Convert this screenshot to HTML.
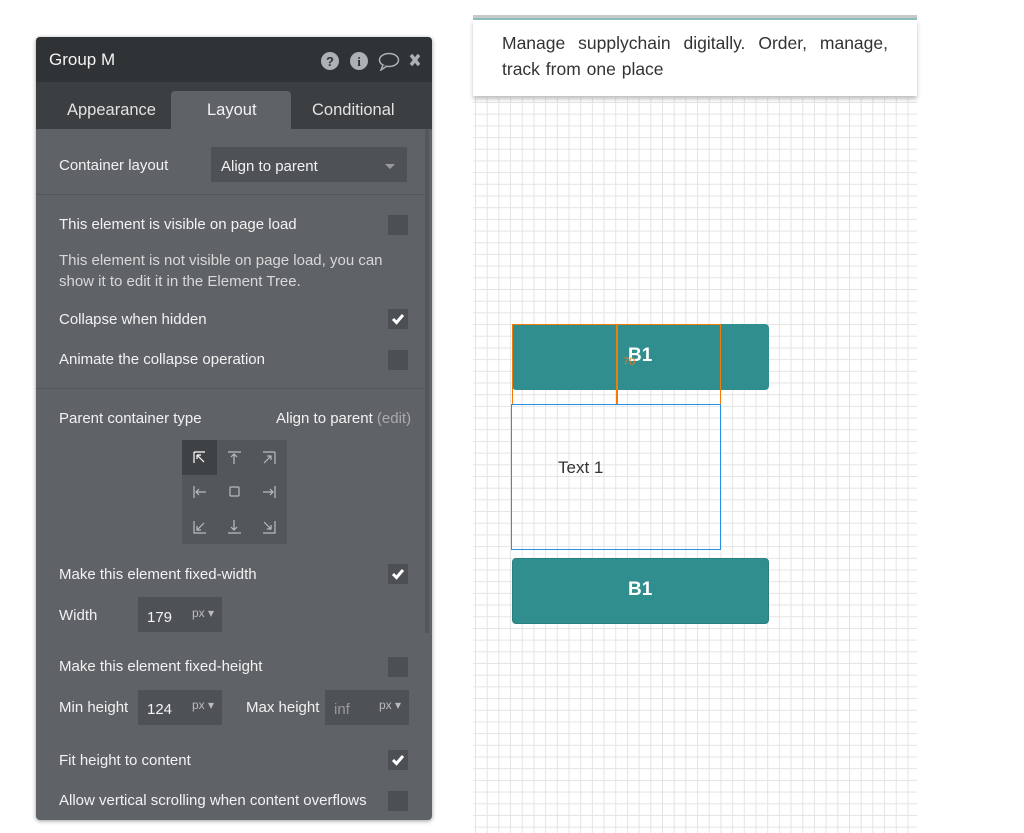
<!DOCTYPE html>
<html><head><meta charset="utf-8"><style>
*{margin:0;padding:0;box-sizing:border-box}
body{width:1024px;height:833px;background:#fff;position:relative;overflow:hidden;font-family:"Liberation Sans","DejaVu Sans",sans-serif}
.a{position:absolute}
.grid{left:473px;top:98px;width:444px;height:735px;background-color:#fff;
background-image:linear-gradient(to right,#e4e4e4 1px,transparent 1px),linear-gradient(to bottom,#e4e4e4 1px,transparent 1px);
background-size:11.7px 11.7px;background-position:2px 4px}
.panel{left:36px;top:37px;width:396px;height:783px;background:#5f6367;border-radius:4px;overflow:hidden;box-shadow:0 1px 4px rgba(0,0,0,.4)}
.t{color:#f2f2f2;font-size:15px;position:absolute;white-space:nowrap}
.cb{position:absolute;left:352px;width:20px;height:20px;background:#4c5053}
.cb svg{position:absolute;left:3px;top:4px}
.inp{position:absolute;background:#4e5256;height:35px}
.sep{position:absolute;left:0;width:388px;height:1px;background:#53575a}
</style></head><body>
<div class="a grid"></div>
<div class="a" style="left:473px;top:15px;width:444px;height:3px;background:#c9c9c9"></div>
<div class="a" style="left:473px;top:18px;width:444px;height:2px;background:#8dbfbd"></div>
<div class="a" style="left:473px;top:20px;width:444px;height:76px;background:#fff;box-shadow:0 3px 4px rgba(0,0,0,.25)"></div>
<div class="a" style="left:502px;top:30px;width:386px;font-size:17.5px;line-height:26px;color:#333;text-align:justify;text-align-last:justify;white-space:nowrap">Manage supplychain digitally. Order, manage,</div>
<div class="a" style="left:502px;top:56px;width:386px;font-size:17.5px;line-height:26px;color:#333;word-spacing:1px">track from one place</div>

<div class="a" style="left:512px;top:324px;width:257px;height:66px;background:#318e8e;border-radius:4px"></div>
<div class="a" style="left:512px;top:324px;width:209px;height:80px;border:1.5px solid #f07d0a;border-bottom:none"></div>
<div class="a" style="left:616px;top:324px;width:1.5px;height:80px;background:#f07d0a"></div>
<div class="a" style="left:628px;top:345px;color:#fff;font-size:19px;font-weight:bold">B1</div>
<div class="a" style="left:623px;top:356px;color:#e27a20;font-size:11px">70</div>
<div class="a" style="left:511px;top:404px;width:210px;height:146px;border:1.5px solid #2d8fe0"></div>
<div class="a" style="left:558px;top:458px;color:#333;font-size:17px">Text 1</div>
<div class="a" style="left:512px;top:558px;width:257px;height:66px;background:#318e8e;border-radius:4px;border:1px solid #2a7f7f"></div>
<div class="a" style="left:628px;top:579px;color:#fff;font-size:19px;font-weight:bold">B1</div>

<div class="a panel">
 <div class="a" style="left:0;top:0;width:396px;height:45px;background:#2f3336"></div>
 <div class="t" style="left:13px;top:13px;font-size:17px">Group M</div>
 <svg class="a" style="left:284px;top:14px" width="100" height="20" viewBox="0 0 100 20">
  <circle cx="10" cy="10" r="9" fill="#aeb1b3"/><text x="10" y="15" font-size="13" font-weight="bold" text-anchor="middle" fill="#2f3336" font-family="Liberation Sans">?</text>
  <circle cx="39" cy="10" r="9" fill="#aeb1b3"/><text x="39" y="15" font-size="13" font-weight="bold" text-anchor="middle" fill="#2f3336" font-family="Liberation Serif">i</text>
  <ellipse cx="69" cy="9" rx="9.5" ry="6.5" fill="none" stroke="#aeb1b3" stroke-width="1.5"/><path d="M63 14 L61 19 L67 15" fill="#2f3336" stroke="#aeb1b3" stroke-width="1.5"/>
  <path d="M91 4 L99 14 M99 4 L91 14" stroke="#aeb1b3" stroke-width="3.5"/>
 </svg>
 <div class="a" style="left:0;top:45px;width:396px;height:47px;background:#3b3f42"></div>
 <div class="a" style="left:135px;top:54px;width:120px;height:38px;background:#5f6367;border-radius:4px 4px 0 0"></div>
 <div class="t" style="left:31px;top:64px;font-size:16.5px;color:#e2e2e2">Appearance</div>
 <div class="t" style="left:171px;top:64px;font-size:16.5px">Layout</div>
 <div class="t" style="left:276px;top:64px;font-size:16.5px;color:#e2e2e2">Conditional</div>
 <div class="a" style="left:389px;top:92px;width:4px;height:504px;background:#54585b"></div>

 <div class="t" style="left:23px;top:120px">Container layout</div>
 <div class="inp" style="left:175px;top:110px;width:196px"></div>
 <div class="t" style="left:185px;top:121px">Align to parent</div>
 <div class="a" style="left:349px;top:127px;border:5px solid transparent;border-top:5px solid #999;border-bottom:none"></div>
 <div class="sep" style="top:157px"></div>

 <div class="t" style="left:23px;top:179px">This element is visible on page load</div>
 <div class="cb" style="top:178px"></div>
 <div class="t" style="left:23px;top:213px;color:#d8d8d8;line-height:21px">This element is not visible on page load, you can<br>show it to edit it in the Element Tree.</div>
 <div class="t" style="left:23px;top:274px">Collapse when hidden</div>
 <div class="cb" style="top:272px"><svg width="14" height="12"><path d="M2 6 L5.5 9.5 L12 2" stroke="#fff" stroke-width="3" fill="none"/></svg></div>
 <div class="t" style="left:23px;top:314px">Animate the collapse operation</div>
 <div class="cb" style="top:313px"></div>
 <div class="sep" style="top:351px"></div>

 <div class="t" style="left:23px;top:373px">Parent container type</div>
 <div class="t" style="left:240px;top:373px">Align to parent <span style="color:#aaa">(edit)</span></div>
 <div class="a" style="left:146px;top:403px;width:105px;height:104px;background:#53575a"></div>
 <div class="a" style="left:146px;top:403px;width:35px;height:35px;background:#3e4245"></div>
 <svg class="a" style="left:146px;top:403px" width="105" height="104" viewBox="0 0 105 104" fill="none" stroke="#b9bcbe" stroke-width="1.2">
  <path d="M12 12 V23 M12 12 H23 M15 15 L22 22 M15 15 H19 M15 15 V19" stroke="#fff"/>
  <path d="M46 12 H59 M52 14 V24 M49 17 L52 14 L55 17"/>
  <path d="M93 12 V24 M81 12 H93 M89 16 L82 23 M85 16 H89 V20"/>
  <path d="M12 46 V58 M14 52 H24 M17 49 L14 52 L17 55"/>
  <rect x="48" y="47" width="9" height="9" rx="1"/>
  <path d="M93 46 V58 M81 52 H91 M88 49 L91 52 L88 55"/>
  <path d="M12 81 V93 H24 M15 90 L22 83 M15 86 V90 H19"/>
  <path d="M46 93 H59 M52 80 V90 M49 87 L52 90 L55 87"/>
  <path d="M93 81 V93 H81 M82 82 L89 89 M85 89 H89 V85"/>
 </svg>

 <div class="t" style="left:23px;top:529px">Make this element fixed-width</div>
 <div class="cb" style="top:527px"><svg width="14" height="12"><path d="M2 6 L5.5 9.5 L12 2" stroke="#fff" stroke-width="3" fill="none"/></svg></div>
 <div class="t" style="left:23px;top:570px">Width</div>
 <div class="inp" style="left:102px;top:560px;width:84px"></div>
 <div class="t" style="left:111px;top:572px">179</div>
 <div class="t" style="left:156px;top:569px;font-size:12px;color:#bbb">px ▾</div>

 <div class="t" style="left:23px;top:621px">Make this element fixed-height</div>
 <div class="cb" style="top:620px"></div>
 <div class="t" style="left:23px;top:662px">Min height</div>
 <div class="inp" style="left:102px;top:653px;width:84px"></div>
 <div class="t" style="left:111px;top:664px">124</div>
 <div class="t" style="left:156px;top:661px;font-size:12px;color:#bbb">px ▾</div>
 <div class="t" style="left:210px;top:662px">Max height</div>
 <div class="inp" style="left:289px;top:653px;width:84px"></div>
 <div class="t" style="left:298px;top:664px;color:#999">inf</div>
 <div class="t" style="left:343px;top:661px;font-size:12px;color:#bbb">px ▾</div>

 <div class="t" style="left:23px;top:715px">Fit height to content</div>
 <div class="cb" style="top:713px"><svg width="14" height="12"><path d="M2 6 L5.5 9.5 L12 2" stroke="#fff" stroke-width="3" fill="none"/></svg></div>
 <div class="t" style="left:23px;top:755px">Allow vertical scrolling when content overflows</div>
 <div class="cb" style="top:754px"></div>
</div>
</body></html>
